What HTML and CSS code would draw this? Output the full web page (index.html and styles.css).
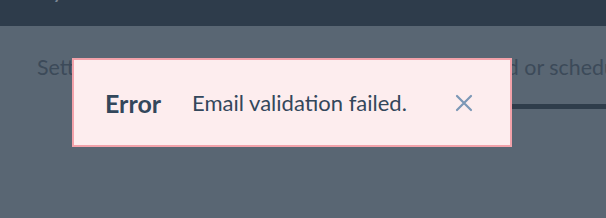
FILE: index.html
```html
<!DOCTYPE html>
<html lang="en">
<head>
  <meta charset="UTF-8">
  <meta name="viewport" content="width=device-width, initial-scale=1.0">
  <title>Email validation</title>
  <link rel="stylesheet" href="styles.css">
</head>
<body>
  <div class="topbar">
    <div class="page-title">My email</div>
  </div>

  <div class="content">
    <p class="intro">Settings are all saved automatically before you send or schedule it.</p>
    <div class="tabs">
      <div class="tab-line"></div>
    </div>
  </div>

  <div class="toast" role="alert">
    <span class="toast-title">Error</span>
    <span class="toast-msg">Email validation failed.</span>
    <button class="toast-close" aria-label="Close">
      <svg width="18" height="18" viewBox="0 0 18 18">
        <path d="M2 2 L16 16 M16 2 L2 16" stroke="#7c98b6" stroke-width="2.2" stroke-linecap="round" fill="none"/>
      </svg>
    </button>
  </div>
</body>
</html>
```

FILE: styles.css
```css
body {
  margin: 0;
  background: #596673;
  font-family: Lato, "Open Sans", sans-serif;
  color: #33475b;
  height: 218px;
  overflow: hidden;
  position: relative;
}
.topbar {
  height: 26px;
  background: #2e3c4b;
  overflow: hidden;
  padding-left: 30px;
}
.page-title {
  font-size: 24px;
  color: #7b8693;
  line-height: 24px;
  margin-top: -23px;
}
.content {
  padding: 0 0 0 37px;
  overflow: hidden;
}
.intro {
  margin: 28px 0 0;
  font-size: 21.4px;
  line-height: 26px;
  color: #3c4a59;
  white-space: nowrap;
}
.tabs {
  display: flex;
  justify-content: flex-end;
  margin-top: 24px;
}
.tab-line {
  width: 100px;
  height: 5px;
  background: #2f3d4b;
}
.toast {
  position: absolute;
  left: 72px;
  top: 58px;
  width: 440px;
  height: 89px;
  box-sizing: border-box;
  border: 2px solid #f2a2aa;
  background: #fdedee;
  display: flex;
  align-items: center;
  padding-left: 31px;
}
.toast-title {
  font-weight: bold;
  font-size: 25px;
  margin-right: 31px;
}
.toast-msg {
  font-size: 22px;
}
.toast-close {
  margin-left: auto;
  margin-right: 37px;
  border: 0;
  padding: 0;
  background: none;
  display: flex;
}
```
